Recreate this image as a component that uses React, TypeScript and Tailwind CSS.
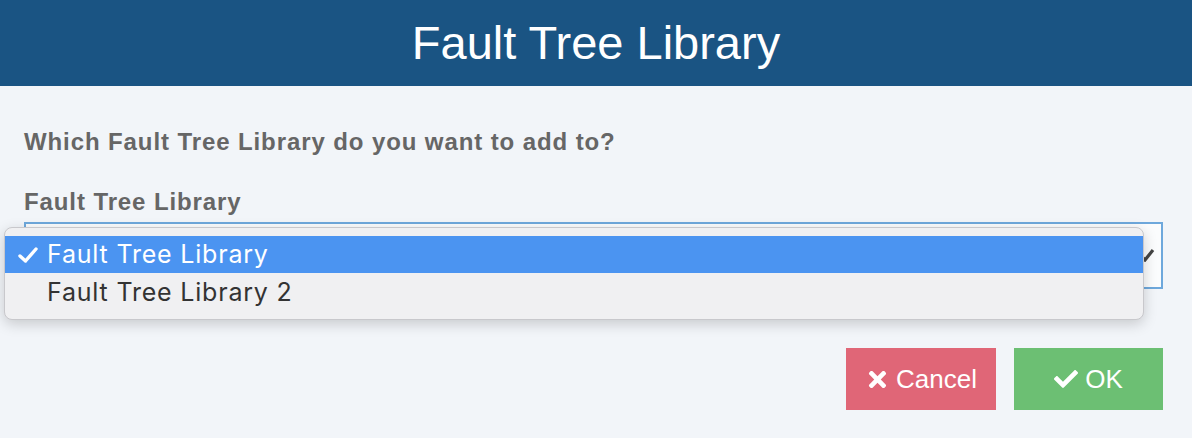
import { FaTimes, FaCheck } from "react-icons/fa"

const options = ["Fault Tree Library", "Fault Tree Library 2"]

export default function App() {
  const selected = 0

  return (
    <div className="relative w-[1192px] h-[438px] overflow-hidden bg-[#f2f5f9]" style={{ fontFamily: '"Liberation Sans", Arial, sans-serif' }}>
      <div className="h-[86px] bg-[#1a5483] flex items-center justify-center">
        <h1 className="text-white text-[47px] leading-none font-normal pb-[2px]">Fault Tree Library</h1>
      </div>

      <div className="pl-6 pr-[29px] pt-[42px]">
        <p className="text-[24px] leading-[28px] font-bold text-[#666666] tracking-[0.9px]">
          Which Fault Tree Library do you want to add to?
        </p>

        <label className="block mt-[32px] text-[24px] leading-[28px] font-bold text-[#666666] tracking-[0.9px]">
          Fault Tree Library
        </label>

        <div className="mt-[6px] h-[67px] border-2 border-[#6ea8dc] bg-[#fbfcfd] flex items-center justify-end pr-[6px]">
          <svg width="16" height="14" viewBox="0 0 16 14" className="mb-[2px]">
            <path d="M2 8 L6 12 L14 2" fill="none" stroke="#444" strokeWidth="3.2" />
          </svg>
        </div>

        <div className="mt-[59px] flex justify-end gap-[18px]">
          <button className="w-[150px] h-[62px] bg-[#e06677] text-white text-[26px] flex items-center justify-center gap-[6px]">
            <FaTimes size={25} />
            <span>Cancel</span>
          </button>
          <button className="w-[149px] h-[62px] bg-[#6cbf73] text-white text-[26px] flex items-center justify-center gap-[7px]">
            <FaCheck size={24} />
            <span>OK</span>
          </button>
        </div>
      </div>

      {/* open native-style select menu */}
      <div
        className="absolute left-[4px] top-[227px] w-[1140px] h-[93px] rounded-[8px] bg-[#f0f0f2] border border-[#c8c8cc] shadow-[0_4px_14px_rgba(0,0,0,0.18)] py-[8px]"
        style={{ fontFamily: 'Inter, "Noto Sans", sans-serif' }}
      >
        {options.map((opt, i) => (
          <div
            key={opt}
            className={
              i === selected
                ? "h-[37px] bg-[#4b94f1] text-white flex items-center"
                : "h-[39px] text-[#333333] flex items-center"
            }
          >
            <span className="w-[42px] flex justify-center pl-[4px]">
              {i === selected && (
                <svg width="22" height="18" viewBox="0 0 22 18">
                  <path d="M3 10 L8.5 15 L19 3" fill="none" stroke="white" strokeWidth="3.4" strokeLinecap="round" strokeLinejoin="round" />
                </svg>
              )}
            </span>
            <span className="text-[25px] leading-none tracking-[0.8px]">{opt}</span>
          </div>
        ))}
      </div>
    </div>
  )
}
